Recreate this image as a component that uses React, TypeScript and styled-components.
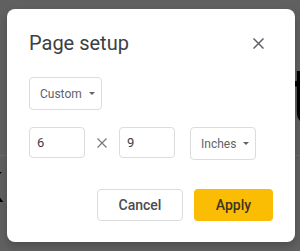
import React from "react";
import styled, { createGlobalStyle } from "styled-components";

const Global = createGlobalStyle`
  html, body { margin: 0; padding: 0; }
  body { font-family: Roboto, "Liberation Sans", Arial, sans-serif; }
  * { box-sizing: border-box; }
`;

const Backdrop = styled.div`
  position: relative;
  width: 300px;
  height: 251px;
  overflow: hidden;
  background: #606060;
  display: flex;
  align-items: flex-start;
  padding: 9px 0 0 7px;
`;

const PageRule = styled.div`
  position: absolute;
  left: 0;
  right: 0;
  top: 155px;
  height: 1px;
  background: #6c6c6c;
`;

const PageGlyph = styled.span<{ $x: number; $y: number; $size: number }>`
  position: absolute;
  left: ${(p) => p.$x}px;
  top: ${(p) => p.$y}px;
  font-family: Roboto, sans-serif;
  font-size: ${(p) => p.$size}px;
  line-height: 1;
  color: #000;
`;

const Dialog = styled.div`
  position: relative;
  z-index: 1;
  width: 288px;
  background: #fff;
  border-radius: 8px;
  padding: 22px 22px 21px 22px;
  display: flex;
  flex-direction: column;
  box-shadow: 0 4px 8px rgba(0, 0, 0, 0.2);
`;

const Header = styled.div`
  display: flex;
  align-items: center;
  justify-content: space-between;
  height: 24px;
`;

const Title = styled.h1`
  margin: 0;
  font-size: 20px;
  line-height: 24px;
  font-weight: 400;
  color: #3c4043;
`;

const CloseButton = styled.button`
  width: 24px;
  height: 24px;
  margin-right: 3px;
  padding: 0;
  border: none;
  background: none;
  display: flex;
  align-items: center;
  justify-content: center;
`;

const Select = styled.div<{ $top: number }>`
  display: inline-flex;
  align-items: center;
  align-self: flex-start;
  gap: 7px;
  height: 33px;
  margin-top: ${(p) => p.$top}px;
  padding: 0 6px 0 10px;
  border: 1px solid #dadce0;
  border-radius: 4px;
  font-size: 12px;
  color: #5f6368;
`;

const Caret = styled.span`
  width: 0;
  height: 0;
  border-left: 3px solid transparent;
  border-right: 3px solid transparent;
  border-top: 3px solid #5f6368;
`;

const SizeRow = styled.div`
  display: flex;
  align-items: flex-start;
  margin-top: 17px;
`;

const NumberBox = styled.div`
  width: 56px;
  height: 31px;
  border: 1px solid #dadce0;
  border-radius: 4px;
  padding-left: 7px;
  display: flex;
  align-items: center;
  font-size: 13px;
  color: #3c4043;
`;

const Times = styled.div`
  width: 34px;
  height: 31px;
  display: flex;
  align-items: center;
  justify-content: center;
`;

const UnitSelect = styled(Select)`
  margin-left: 15px;
`;

const Actions = styled.div`
  display: flex;
  justify-content: flex-end;
  gap: 11px;
  margin-top: 29px;
`;

const Button = styled.button<{ $primary?: boolean; $w: number }>`
  width: ${(p) => p.$w}px;
  height: 32px;
  border-radius: 4px;
  border: ${(p) => (p.$primary ? "none" : "1px solid #dadce0")};
  background: ${(p) => (p.$primary ? "#fbbc04" : "#fff")};
  color: ${(p) => (p.$primary ? "#3c3520" : "#494c50")};
  font-family: Roboto, sans-serif;
  font-size: 14px;
  font-weight: 500;
  padding: 0;
`;

export default function App() {
  return (
    <>
      <Global />
      <Backdrop>
        <PageRule />
        <PageGlyph $x={289} $y={57} $size={78}>t</PageGlyph>
        <PageGlyph $x={-26} $y={153} $size={58}>k</PageGlyph>
        <Dialog>
          <Header>
            <Title>Page setup</Title>
            <CloseButton aria-label="Close">
              <svg width="11" height="11" viewBox="0 0 11 11">
                <path d="M0.5 0.5L10.5 10.5M10.5 0.5L0.5 10.5" stroke="#5f6368" strokeWidth="1.5" />
              </svg>
            </CloseButton>
          </Header>
          <Select $top={22}>
            Custom
            <Caret />
          </Select>
          <SizeRow>
            <NumberBox>6</NumberBox>
            <Times>
              <svg width="10" height="10" viewBox="0 0 10 10">
                <path d="M0.5 0.5L9.5 9.5M9.5 0.5L0.5 9.5" stroke="#70757a" strokeWidth="1.1" />
              </svg>
            </Times>
            <NumberBox>9</NumberBox>
            <UnitSelect $top={0}>
              Inches
              <Caret />
            </UnitSelect>
          </SizeRow>
          <Actions>
            <Button $w={86}>Cancel</Button>
            <Button $w={79} $primary>
              Apply
            </Button>
          </Actions>
        </Dialog>
      </Backdrop>
    </>
  );
}
